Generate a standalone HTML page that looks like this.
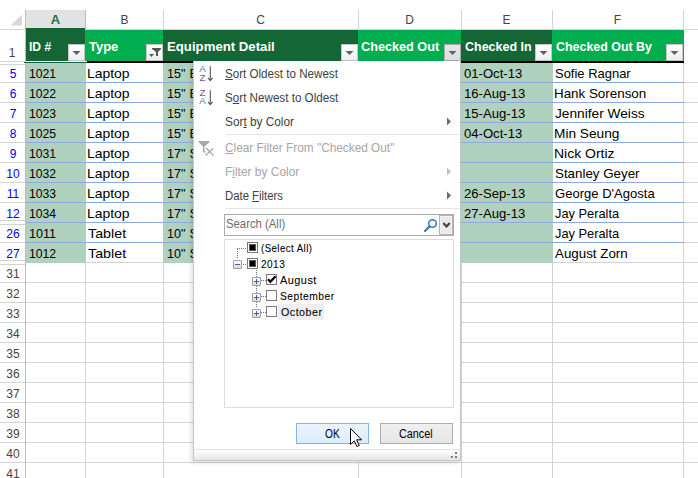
<!DOCTYPE html><html><head><meta charset="utf-8"><style>
html,body{margin:0;padding:0;background:#fff;width:698px;height:478px;overflow:hidden;position:relative;font-family:"Liberation Sans",sans-serif}
.a{position:absolute}
.t{position:absolute;white-space:nowrap;transform-origin:0 0}
u{text-decoration:underline;text-decoration-thickness:1px;text-underline-offset:1px}
</style></head><body>
<div class="a" style="left:85px;top:10px;width:1px;height:468px;background:#D4D4D4;"></div>
<div class="a" style="left:163px;top:10px;width:1px;height:468px;background:#D4D4D4;"></div>
<div class="a" style="left:358px;top:10px;width:1px;height:468px;background:#D4D4D4;"></div>
<div class="a" style="left:461px;top:10px;width:1px;height:468px;background:#D4D4D4;"></div>
<div class="a" style="left:552px;top:10px;width:1px;height:468px;background:#D4D4D4;"></div>
<div class="a" style="left:683px;top:10px;width:1px;height:468px;background:#D4D4D4;"></div>
<div class="a" style="left:0px;top:29px;width:698px;height:1px;background:#D4D4D4;"></div>
<div class="a" style="left:0px;top:82px;width:698px;height:1px;background:#D4D4D4;"></div>
<div class="a" style="left:0px;top:102px;width:698px;height:1px;background:#D4D4D4;"></div>
<div class="a" style="left:0px;top:122px;width:698px;height:1px;background:#D4D4D4;"></div>
<div class="a" style="left:0px;top:142px;width:698px;height:1px;background:#D4D4D4;"></div>
<div class="a" style="left:0px;top:162px;width:698px;height:1px;background:#D4D4D4;"></div>
<div class="a" style="left:0px;top:182px;width:698px;height:1px;background:#D4D4D4;"></div>
<div class="a" style="left:0px;top:202px;width:698px;height:1px;background:#D4D4D4;"></div>
<div class="a" style="left:0px;top:222px;width:698px;height:1px;background:#D4D4D4;"></div>
<div class="a" style="left:0px;top:242px;width:698px;height:1px;background:#D4D4D4;"></div>
<div class="a" style="left:0px;top:262px;width:698px;height:1px;background:#D4D4D4;"></div>
<div class="a" style="left:0px;top:282px;width:698px;height:1px;background:#D4D4D4;"></div>
<div class="a" style="left:0px;top:302px;width:698px;height:1px;background:#D4D4D4;"></div>
<div class="a" style="left:0px;top:322px;width:698px;height:1px;background:#D4D4D4;"></div>
<div class="a" style="left:0px;top:342px;width:698px;height:1px;background:#D4D4D4;"></div>
<div class="a" style="left:0px;top:362px;width:698px;height:1px;background:#D4D4D4;"></div>
<div class="a" style="left:0px;top:382px;width:698px;height:1px;background:#D4D4D4;"></div>
<div class="a" style="left:0px;top:402px;width:698px;height:1px;background:#D4D4D4;"></div>
<div class="a" style="left:0px;top:422px;width:698px;height:1px;background:#D4D4D4;"></div>
<div class="a" style="left:0px;top:442px;width:698px;height:1px;background:#D4D4D4;"></div>
<div class="a" style="left:0px;top:462px;width:698px;height:1px;background:#D4D4D4;"></div>
<div class="a" style="left:25px;top:10px;width:1px;height:468px;background:#BDBDBD;"></div>
<div class="a" style="left:0px;top:222px;width:25px;height:1px;background:#fff;"></div>
<div class="a" style="left:0px;top:262px;width:25px;height:1px;background:#fff;"></div>
<div class="a" style="left:0px;top:61px;width:25px;height:1px;background:#D4D4D4;"></div>
<div class="a" style="left:0px;top:64px;width:25px;height:1px;background:#D4D4D4;"></div>
<div class="a" style="left:0px;top:220px;width:25px;height:1px;background:#D4D4D4;"></div>
<div class="a" style="left:0px;top:224px;width:25px;height:1px;background:#D4D4D4;"></div>
<div class="a" style="left:0px;top:260px;width:25px;height:1px;background:#D4D4D4;"></div>
<div class="a" style="left:0px;top:264px;width:25px;height:1px;background:#D4D4D4;"></div>
<svg class="a" style="left:14px;top:14px;overflow:visible" width="9" height="12"><polygon points="8,0.4 8,11.4 -3.5,11.4" fill="#D8D8D8"/></svg>
<div class="a" style="left:26px;top:10px;width:59px;height:18px;background:#E1E3E2;"></div>
<div class="a" style="left:85px;top:10px;width:1px;height:19px;background:#BDBDBD;"></div>
<div class="t" style="left:26px;top:13px;font-size:13px;line-height:13px;color:#217346;font-weight:bold;width:59px;text-align:center;">A</div>
<div class="t" style="left:86px;top:14px;font-size:12px;line-height:12px;color:#444;width:77px;text-align:center;">B</div>
<div class="t" style="left:163px;top:14px;font-size:12px;line-height:12px;color:#444;width:195px;text-align:center;">C</div>
<div class="t" style="left:358px;top:14px;font-size:12px;line-height:12px;color:#444;width:103px;text-align:center;">D</div>
<div class="t" style="left:461px;top:14px;font-size:12px;line-height:12px;color:#444;width:91px;text-align:center;">E</div>
<div class="t" style="left:552px;top:14px;font-size:12px;line-height:12px;color:#444;width:131px;text-align:center;">F</div>
<div class="a" style="left:26px;top:30px;width:59px;height:31px;background:#146634;"></div>
<div class="a" style="left:85px;top:30px;width:78px;height:31px;background:#00AE4F;"></div>
<div class="a" style="left:163px;top:30px;width:195px;height:31px;background:#146634;"></div>
<div class="a" style="left:358px;top:30px;width:103px;height:31px;background:#00AE4F;"></div>
<div class="a" style="left:461px;top:30px;width:91px;height:31px;background:#146634;"></div>
<div class="a" style="left:552px;top:30px;width:132px;height:31px;background:#00AE4F;"></div>
<div class="a" style="left:26px;top:28px;width:59px;height:33px;background:#146634;"></div>
<div class="a" style="left:26px;top:61px;width:61px;height:1px;background:#fff;"></div>
<div class="a" style="left:24px;top:62px;width:64px;height:1px;background:#146634;"></div>
<div class="a" style="left:87px;top:61px;width:597px;height:2px;background:#000;"></div>
<div class="t" style="left:28.60px;top:40px;font-size:13px;line-height:13px;color:#fff;font-weight:bold;transform:scaleX(0.930);">ID #</div>
<div class="t" style="left:88.90px;top:40px;font-size:13px;line-height:13px;color:#fff;font-weight:bold;transform:scaleX(0.995);">Type</div>
<div class="t" style="left:166.50px;top:40px;font-size:13px;line-height:13px;color:#fff;font-weight:bold;transform:scaleX(1.015);">Equipment Detail</div>
<div class="t" style="left:361.30px;top:40px;font-size:13px;line-height:13px;color:#fff;font-weight:bold;transform:scaleX(0.975);">Checked Out</div>
<div class="t" style="left:464.50px;top:40px;font-size:13px;line-height:13px;color:#fff;font-weight:bold;transform:scaleX(0.961);">Checked In</div>
<div class="t" style="left:555.50px;top:40px;font-size:13px;line-height:13px;color:#fff;font-weight:bold;transform:scaleX(0.956);">Checked Out By</div>
<div class="t" style="left:0.5px;top:68px;font-size:12px;line-height:12px;color:#0000F5;width:25px;text-align:center;">5</div>
<div class="t" style="left:0.5px;top:88px;font-size:12px;line-height:12px;color:#0000F5;width:25px;text-align:center;">6</div>
<div class="t" style="left:0.5px;top:108px;font-size:12px;line-height:12px;color:#0000F5;width:25px;text-align:center;">7</div>
<div class="t" style="left:0.5px;top:128px;font-size:12px;line-height:12px;color:#0000F5;width:25px;text-align:center;">8</div>
<div class="t" style="left:0.5px;top:148px;font-size:12px;line-height:12px;color:#0000F5;width:25px;text-align:center;">9</div>
<div class="t" style="left:0.5px;top:168px;font-size:12px;line-height:12px;color:#0000F5;width:25px;text-align:center;">10</div>
<div class="t" style="left:0.5px;top:188px;font-size:12px;line-height:12px;color:#0000F5;width:25px;text-align:center;">11</div>
<div class="t" style="left:0.5px;top:208px;font-size:12px;line-height:12px;color:#0000F5;width:25px;text-align:center;">12</div>
<div class="t" style="left:0.5px;top:228px;font-size:12px;line-height:12px;color:#0000F5;width:25px;text-align:center;">26</div>
<div class="t" style="left:0.5px;top:248px;font-size:12px;line-height:12px;color:#0000F5;width:25px;text-align:center;">27</div>
<div class="t" style="left:0.5px;top:268px;font-size:12px;line-height:12px;color:#444;width:25px;text-align:center;">31</div>
<div class="t" style="left:0.5px;top:288px;font-size:12px;line-height:12px;color:#444;width:25px;text-align:center;">32</div>
<div class="t" style="left:0.5px;top:308px;font-size:12px;line-height:12px;color:#444;width:25px;text-align:center;">33</div>
<div class="t" style="left:0.5px;top:328px;font-size:12px;line-height:12px;color:#444;width:25px;text-align:center;">34</div>
<div class="t" style="left:0.5px;top:348px;font-size:12px;line-height:12px;color:#444;width:25px;text-align:center;">35</div>
<div class="t" style="left:0.5px;top:368px;font-size:12px;line-height:12px;color:#444;width:25px;text-align:center;">36</div>
<div class="t" style="left:0.5px;top:388px;font-size:12px;line-height:12px;color:#444;width:25px;text-align:center;">37</div>
<div class="t" style="left:0.5px;top:408px;font-size:12px;line-height:12px;color:#444;width:25px;text-align:center;">38</div>
<div class="t" style="left:0.5px;top:428px;font-size:12px;line-height:12px;color:#444;width:25px;text-align:center;">39</div>
<div class="t" style="left:0.5px;top:448px;font-size:12px;line-height:12px;color:#444;width:25px;text-align:center;">40</div>
<div class="t" style="left:0.5px;top:468px;font-size:12px;line-height:12px;color:#444;width:25px;text-align:center;">41</div>
<div class="t" style="left:0px;top:47px;font-size:12px;line-height:12px;color:#444;width:24px;text-align:center;">1</div>
<div class="a" style="left:26px;top:63px;width:60px;height:20px;background:#B0D1BD;"></div>
<div class="a" style="left:163px;top:63px;width:195px;height:20px;background:#B0D1BD;"></div>
<div class="a" style="left:461px;top:63px;width:92px;height:20px;background:#B0D1BD;"></div>
<div class="a" style="left:26px;top:82px;width:658px;height:1px;background:#8EA9DB;"></div>
<div class="a" style="left:26px;top:83px;width:60px;height:20px;background:#B0D1BD;"></div>
<div class="a" style="left:163px;top:83px;width:195px;height:20px;background:#B0D1BD;"></div>
<div class="a" style="left:461px;top:83px;width:92px;height:20px;background:#B0D1BD;"></div>
<div class="a" style="left:26px;top:102px;width:658px;height:1px;background:#8EA9DB;"></div>
<div class="a" style="left:26px;top:103px;width:60px;height:20px;background:#B0D1BD;"></div>
<div class="a" style="left:163px;top:103px;width:195px;height:20px;background:#B0D1BD;"></div>
<div class="a" style="left:461px;top:103px;width:92px;height:20px;background:#B0D1BD;"></div>
<div class="a" style="left:26px;top:122px;width:658px;height:1px;background:#8EA9DB;"></div>
<div class="a" style="left:26px;top:123px;width:60px;height:20px;background:#B0D1BD;"></div>
<div class="a" style="left:163px;top:123px;width:195px;height:20px;background:#B0D1BD;"></div>
<div class="a" style="left:461px;top:123px;width:92px;height:20px;background:#B0D1BD;"></div>
<div class="a" style="left:26px;top:142px;width:658px;height:1px;background:#8EA9DB;"></div>
<div class="a" style="left:26px;top:143px;width:60px;height:20px;background:#B0D1BD;"></div>
<div class="a" style="left:163px;top:143px;width:195px;height:20px;background:#B0D1BD;"></div>
<div class="a" style="left:461px;top:143px;width:92px;height:20px;background:#B0D1BD;"></div>
<div class="a" style="left:26px;top:162px;width:658px;height:1px;background:#8EA9DB;"></div>
<div class="a" style="left:26px;top:163px;width:60px;height:20px;background:#B0D1BD;"></div>
<div class="a" style="left:163px;top:163px;width:195px;height:20px;background:#B0D1BD;"></div>
<div class="a" style="left:461px;top:163px;width:92px;height:20px;background:#B0D1BD;"></div>
<div class="a" style="left:26px;top:182px;width:658px;height:1px;background:#8EA9DB;"></div>
<div class="a" style="left:26px;top:183px;width:60px;height:20px;background:#B0D1BD;"></div>
<div class="a" style="left:163px;top:183px;width:195px;height:20px;background:#B0D1BD;"></div>
<div class="a" style="left:461px;top:183px;width:92px;height:20px;background:#B0D1BD;"></div>
<div class="a" style="left:26px;top:202px;width:658px;height:1px;background:#8EA9DB;"></div>
<div class="a" style="left:26px;top:203px;width:60px;height:20px;background:#B0D1BD;"></div>
<div class="a" style="left:163px;top:203px;width:195px;height:20px;background:#B0D1BD;"></div>
<div class="a" style="left:461px;top:203px;width:92px;height:20px;background:#B0D1BD;"></div>
<div class="a" style="left:26px;top:222px;width:658px;height:1px;background:#8EA9DB;"></div>
<div class="a" style="left:26px;top:223px;width:60px;height:20px;background:#B0D1BD;"></div>
<div class="a" style="left:163px;top:223px;width:195px;height:20px;background:#B0D1BD;"></div>
<div class="a" style="left:461px;top:223px;width:92px;height:20px;background:#B0D1BD;"></div>
<div class="a" style="left:26px;top:242px;width:658px;height:1px;background:#8EA9DB;"></div>
<div class="a" style="left:26px;top:243px;width:60px;height:20px;background:#B0D1BD;"></div>
<div class="a" style="left:163px;top:243px;width:195px;height:20px;background:#B0D1BD;"></div>
<div class="a" style="left:461px;top:243px;width:92px;height:20px;background:#B0D1BD;"></div>
<div class="t" style="left:28.60px;top:67px;font-size:13px;line-height:13px;color:#000;transform:scaleX(0.938);">1021</div>
<div class="t" style="left:87.23px;top:67px;font-size:13px;line-height:13px;color:#000;transform:scaleX(1.072);">Laptop</div>
<div class="t" style="left:166.50px;top:67px;font-size:13px;line-height:13px;color:#000;transform:scaleX(0.966);">15&quot</div>
<div class="t" style="left:189.5px;top:67px;font-size:13px;line-height:13px;color:#000;"> EliteBook</div>
<div class="t" style="left:464.20px;top:67px;font-size:13px;line-height:13px;color:#000;transform:scaleX(1.007);">01-Oct-13</div>
<div class="t" style="left:555.40px;top:67px;font-size:13px;line-height:13px;color:#000;transform:scaleX(0.997);">Sofie Ragnar</div>
<div class="t" style="left:28.60px;top:87px;font-size:13px;line-height:13px;color:#000;transform:scaleX(0.938);">1022</div>
<div class="t" style="left:87.23px;top:87px;font-size:13px;line-height:13px;color:#000;transform:scaleX(1.072);">Laptop</div>
<div class="t" style="left:166.50px;top:87px;font-size:13px;line-height:13px;color:#000;transform:scaleX(0.966);">15&quot</div>
<div class="t" style="left:189.5px;top:87px;font-size:13px;line-height:13px;color:#000;"> EliteBook</div>
<div class="t" style="left:464.20px;top:87px;font-size:13px;line-height:13px;color:#000;transform:scaleX(1.009);">16-Aug-13</div>
<div class="t" style="left:554.37px;top:87px;font-size:13px;line-height:13px;color:#000;transform:scaleX(1.029);">Hank Sorenson</div>
<div class="t" style="left:28.60px;top:107px;font-size:13px;line-height:13px;color:#000;transform:scaleX(0.938);">1023</div>
<div class="t" style="left:87.23px;top:107px;font-size:13px;line-height:13px;color:#000;transform:scaleX(1.072);">Laptop</div>
<div class="t" style="left:166.50px;top:107px;font-size:13px;line-height:13px;color:#000;transform:scaleX(0.966);">15&quot</div>
<div class="t" style="left:189.5px;top:107px;font-size:13px;line-height:13px;color:#000;"> EliteBook</div>
<div class="t" style="left:464.20px;top:107px;font-size:13px;line-height:13px;color:#000;transform:scaleX(1.009);">15-Aug-13</div>
<div class="t" style="left:555.40px;top:107px;font-size:13px;line-height:13px;color:#000;transform:scaleX(1.054);">Jennifer Weiss</div>
<div class="t" style="left:28.60px;top:127px;font-size:13px;line-height:13px;color:#000;transform:scaleX(0.938);">1025</div>
<div class="t" style="left:87.23px;top:127px;font-size:13px;line-height:13px;color:#000;transform:scaleX(1.072);">Laptop</div>
<div class="t" style="left:166.50px;top:127px;font-size:13px;line-height:13px;color:#000;transform:scaleX(0.966);">15&quot</div>
<div class="t" style="left:189.5px;top:127px;font-size:13px;line-height:13px;color:#000;"> EliteBook</div>
<div class="t" style="left:464.20px;top:127px;font-size:13px;line-height:13px;color:#000;transform:scaleX(1.007);">04-Oct-13</div>
<div class="t" style="left:554.35px;top:127px;font-size:13px;line-height:13px;color:#000;transform:scaleX(1.052);">Min Seung</div>
<div class="t" style="left:28.60px;top:147px;font-size:13px;line-height:13px;color:#000;transform:scaleX(0.938);">1031</div>
<div class="t" style="left:87.23px;top:147px;font-size:13px;line-height:13px;color:#000;transform:scaleX(1.072);">Laptop</div>
<div class="t" style="left:166.50px;top:147px;font-size:13px;line-height:13px;color:#000;transform:scaleX(0.966);">17&quot</div>
<div class="t" style="left:189.5px;top:147px;font-size:13px;line-height:13px;color:#000;"> Satellite</div>
<div class="t" style="left:554.33px;top:147px;font-size:13px;line-height:13px;color:#000;transform:scaleX(1.074);">Nick Ortiz</div>
<div class="t" style="left:28.60px;top:167px;font-size:13px;line-height:13px;color:#000;transform:scaleX(0.938);">1032</div>
<div class="t" style="left:87.23px;top:167px;font-size:13px;line-height:13px;color:#000;transform:scaleX(1.072);">Laptop</div>
<div class="t" style="left:166.50px;top:167px;font-size:13px;line-height:13px;color:#000;transform:scaleX(0.966);">17&quot</div>
<div class="t" style="left:189.5px;top:167px;font-size:13px;line-height:13px;color:#000;"> Satellite</div>
<div class="t" style="left:555.40px;top:167px;font-size:13px;line-height:13px;color:#000;transform:scaleX(1.026);">Stanley Geyer</div>
<div class="t" style="left:28.60px;top:187px;font-size:13px;line-height:13px;color:#000;transform:scaleX(0.938);">1033</div>
<div class="t" style="left:87.23px;top:187px;font-size:13px;line-height:13px;color:#000;transform:scaleX(1.072);">Laptop</div>
<div class="t" style="left:166.50px;top:187px;font-size:13px;line-height:13px;color:#000;transform:scaleX(0.966);">17&quot</div>
<div class="t" style="left:189.5px;top:187px;font-size:13px;line-height:13px;color:#000;"> Satellite</div>
<div class="t" style="left:464.20px;top:187px;font-size:13px;line-height:13px;color:#000;transform:scaleX(1.009);">26-Sep-13</div>
<div class="t" style="left:555.40px;top:187px;font-size:13px;line-height:13px;color:#000;transform:scaleX(1.004);">George D&#39;Agosta</div>
<div class="t" style="left:28.60px;top:207px;font-size:13px;line-height:13px;color:#000;transform:scaleX(0.938);">1034</div>
<div class="t" style="left:87.23px;top:207px;font-size:13px;line-height:13px;color:#000;transform:scaleX(1.072);">Laptop</div>
<div class="t" style="left:166.50px;top:207px;font-size:13px;line-height:13px;color:#000;transform:scaleX(0.966);">17&quot</div>
<div class="t" style="left:189.5px;top:207px;font-size:13px;line-height:13px;color:#000;"> Satellite</div>
<div class="t" style="left:464.20px;top:207px;font-size:13px;line-height:13px;color:#000;transform:scaleX(1.009);">27-Aug-13</div>
<div class="t" style="left:555.40px;top:207px;font-size:13px;line-height:13px;color:#000;transform:scaleX(0.985);">Jay Peralta</div>
<div class="t" style="left:28.60px;top:227px;font-size:13px;line-height:13px;color:#000;transform:scaleX(0.970);">1011</div>
<div class="t" style="left:88.20px;top:227px;font-size:13px;line-height:13px;color:#000;transform:scaleX(1.100);">Tablet</div>
<div class="t" style="left:166.50px;top:227px;font-size:13px;line-height:13px;color:#000;transform:scaleX(0.966);">10&quot</div>
<div class="t" style="left:189.5px;top:227px;font-size:13px;line-height:13px;color:#000;"> Surface</div>
<div class="t" style="left:555.40px;top:227px;font-size:13px;line-height:13px;color:#000;transform:scaleX(0.985);">Jay Peralta</div>
<div class="t" style="left:28.60px;top:247px;font-size:13px;line-height:13px;color:#000;transform:scaleX(0.938);">1012</div>
<div class="t" style="left:88.20px;top:247px;font-size:13px;line-height:13px;color:#000;transform:scaleX(1.100);">Tablet</div>
<div class="t" style="left:166.50px;top:247px;font-size:13px;line-height:13px;color:#000;transform:scaleX(0.966);">10&quot</div>
<div class="t" style="left:189.5px;top:247px;font-size:13px;line-height:13px;color:#000;"> Surface</div>
<div class="t" style="left:555.40px;top:247px;font-size:13px;line-height:13px;color:#000;transform:scaleX(1.026);">August Zorn</div>
<div class="a" style="left:68px;top:44px;width:15px;height:15px;border:1px solid #C5C5CC;background:linear-gradient(#FFFFFF,#EEEEF2)"></div>
<svg class="a" style="left:68px;top:44px" width="17" height="17"><polygon points="4.5,7 12.5,7 8.5,11" fill="#606060"/></svg>
<div class="a" style="left:146px;top:44px;width:15px;height:15px;border:1px solid #C5C5CC;background:linear-gradient(#FFFFFF,#EEEEF2)"></div>
<svg class="a" style="left:146px;top:44px" width="17" height="17"><polygon points="6,4 15,4 15,5 12,8 12,12 10,12 10,8 6,5" fill="#555"/><polygon points="3,10 8,10 5.5,13" fill="#555"/></svg>
<div class="a" style="left:341px;top:44px;width:15px;height:15px;border:1px solid #C5C5CC;background:linear-gradient(#FFFFFF,#EEEEF2)"></div>
<svg class="a" style="left:341px;top:44px" width="17" height="17"><polygon points="4.5,7 12.5,7 8.5,11" fill="#606060"/></svg>
<div class="a" style="left:444px;top:44px;width:15px;height:15px;border:1px solid #A9A9B1;background:linear-gradient(#E6E7EC,#DCDEE4)"></div>
<svg class="a" style="left:444px;top:44px" width="17" height="17"><polygon points="4.5,7 12.5,7 8.5,11" fill="#606060"/></svg>
<div class="a" style="left:535px;top:44px;width:15px;height:15px;border:1px solid #C5C5CC;background:linear-gradient(#FFFFFF,#EEEEF2)"></div>
<svg class="a" style="left:535px;top:44px" width="17" height="17"><polygon points="4.5,7 12.5,7 8.5,11" fill="#606060"/></svg>
<div class="a" style="left:666px;top:44px;width:15px;height:15px;border:1px solid #C5C5CC;background:linear-gradient(#FFFFFF,#EEEEF2)"></div>
<svg class="a" style="left:666px;top:44px" width="17" height="17"><polygon points="4.5,7 12.5,7 8.5,11" fill="#606060"/></svg>
<div class="a" style="left:193px;top:61px;width:266px;height:399px;background:#fff;border:1px solid #C6C6C6;border-top:none;box-shadow:-2px 2px 4px rgba(0,0,0,0.12)"></div>
<div class="t" style="left:225.10px;top:68px;font-size:12px;line-height:12px;color:#404040;transform:scaleX(0.967);"><u>S</u>ort Oldest to Newest</div>
<div class="t" style="left:225.10px;top:92px;font-size:12px;line-height:12px;color:#404040;transform:scaleX(0.970);">S<u>o</u>rt Newest to Oldest</div>
<div class="t" style="left:225.10px;top:116px;font-size:12px;line-height:12px;color:#404040;transform:scaleX(0.984);">Sor<u>t</u> by Color</div>
<div class="t" style="left:225.10px;top:142px;font-size:12px;line-height:12px;color:#A6A6A6;transform:scaleX(0.985);"><u>C</u>lear Filter From &quot;Checked Out&quot;</div>
<div class="t" style="left:225.10px;top:166px;font-size:12px;line-height:12px;color:#A6A6A6;transform:scaleX(0.995);">F<u>i</u>lter by Color</div>
<div class="t" style="left:225.10px;top:190px;font-size:12px;line-height:12px;color:#404040;transform:scaleX(0.945);">Date <u>F</u>ilters</div>
<div class="a" style="left:226px;top:134px;width:234px;height:1px;background:#E3E3E3;"></div>
<div class="a" style="left:226px;top:208px;width:234px;height:1px;background:#E3E3E3;"></div>
<svg class="a" style="left:446px;top:117.0px" width="6" height="9"><polygon points="1,0.5 5,4.5 1,8.5" fill="#6A6A6A"/></svg>
<svg class="a" style="left:446px;top:167.0px" width="6" height="9"><polygon points="1,0.5 5,4.5 1,8.5" fill="#C0C0C0"/></svg>
<svg class="a" style="left:446px;top:191.0px" width="6" height="9"><polygon points="1,0.5 5,4.5 1,8.5" fill="#6A6A6A"/></svg>
<svg class="a" style="left:198px;top:64px" width="17" height="42" font-family="Liberation Sans">
<text x="1.3" y="8.3" font-size="9.8" fill="#3E7CC4">A</text><text x="1.6" y="16.8" font-size="9.8" fill="#7B4FA6">Z</text>
<path d="M12.3 2.2 V16.6 M10 13.8 L12.3 16.6 L14.6 13.8" stroke="#555" stroke-width="1.1" fill="none"/>
<text x="1.6" y="32.4" font-size="9.8" fill="#7B4FA6">Z</text><text x="1.3" y="40.4" font-size="9.8" fill="#3E7CC4">A</text>
<path d="M12.3 26.2 V40.6 M10 37.8 L12.3 40.6 L14.6 37.8" stroke="#555" stroke-width="1.1" fill="none"/>
</svg>
<svg class="a" style="left:198px;top:140px" width="17" height="17">
<polygon points="0.5,1 11.5,1 11.5,2 6.5,6.5 6.5,11.5 8,11.5 8,12.5 5,12.5 5,6.5 0.5,2" fill="#A8A8A8"/>
<path d="M8 8 L15.5 15.5 M7.5 15.5 L15 8.5" stroke="#A8A8A8" stroke-width="1.2"/>
</svg>
<div class="a" style="left:224px;top:214px;width:228px;height:20px;border:1px solid #ABABAB;background:#fff"></div>
<div class="t" style="left:226.20px;top:218px;font-size:12px;line-height:12px;color:#6D6D6D;transform:scaleX(0.944);">Search (All)</div>
<div class="a" style="left:439px;top:215px;width:12px;height:18px;background:#E9E9E9;border:1px solid #B4B4B4;box-shadow:inset 0 0 0 1px #F2F2F2"></div>
<svg class="a" style="left:421px;top:216px" width="32" height="18">
<circle cx="11.5" cy="7.5" r="3.8" stroke="#3B78C0" stroke-width="1.6" fill="none"/>
<path d="M8.6 10.4 L4 15" stroke="#3B78C0" stroke-width="2.2" stroke-linecap="round"/>
<path d="M22.3 7 L25.5 10.5 L28.7 7" stroke="#404040" stroke-width="2.1" fill="none"/>
</svg>
<div class="a" style="left:224px;top:239px;width:228px;height:167px;border:1px solid #DCDCDC;background:#fff"></div>
<div class="a" style="left:237px;top:248px;width:9px;height:1px;background:repeating-linear-gradient(90deg,#777 0 1px,transparent 1px 2px)"></div>
<div class="a" style="left:237px;top:249px;width:1px;height:10px;background:repeating-linear-gradient(180deg,#777 0 1px,transparent 1px 2px)"></div>
<div class="a" style="left:243px;top:264px;width:4px;height:1px;background:repeating-linear-gradient(90deg,#777 0 1px,transparent 1px 2px)"></div>
<div class="a" style="left:256px;top:270px;width:1px;height:37px;background:repeating-linear-gradient(180deg,#777 0 1px,transparent 1px 2px)"></div>
<div class="a" style="left:261px;top:280px;width:5px;height:1px;background:repeating-linear-gradient(90deg,#777 0 1px,transparent 1px 2px)"></div>
<div class="a" style="left:261px;top:296px;width:5px;height:1px;background:repeating-linear-gradient(90deg,#777 0 1px,transparent 1px 2px)"></div>
<div class="a" style="left:261px;top:312px;width:5px;height:1px;background:repeating-linear-gradient(90deg,#777 0 1px,transparent 1px 2px)"></div>
<div class="a" style="left:247px;top:242px;width:9px;height:9px;border:1px solid #7A7A7A;background:#fff"></div>
<div class="a" style="left:249px;top:244px;width:7px;height:7px;background:#5A5A5A;"></div>
<div class="a" style="left:250px;top:245px;width:5px;height:5px;background:#000;"></div>
<div class="a" style="left:247px;top:258px;width:9px;height:9px;border:1px solid #7A7A7A;background:#fff"></div>
<div class="a" style="left:249px;top:260px;width:7px;height:7px;background:#5A5A5A;"></div>
<div class="a" style="left:250px;top:261px;width:5px;height:5px;background:#000;"></div>
<div class="a" style="left:233px;top:260px;width:7px;height:7px;border:1px solid #A0A0A0;background:linear-gradient(#FFFFFF,#DADADA);border-radius:1px"></div>
<div class="a" style="left:235px;top:264px;width:5px;height:1px;background:#3D5FA8;"></div>
<div class="a" style="left:266px;top:274px;width:9px;height:9px;border:1px solid #7A7A7A;background:#fff"></div>
<svg class="a" style="left:266px;top:274px" width="11" height="11"><path d="M2 5.2 L4.3 7.8 L9.6 2.2" stroke="#000" stroke-width="2.2" fill="none"/></svg>
<div class="a" style="left:252px;top:277px;width:7px;height:7px;border:1px solid #A0A0A0;background:linear-gradient(#FFFFFF,#DADADA);border-radius:1px"></div>
<div class="a" style="left:254px;top:281px;width:5px;height:1px;background:#3D5FA8;"></div>
<div class="a" style="left:256px;top:279px;width:1px;height:5px;background:#3D5FA8;"></div>
<div class="a" style="left:266px;top:290px;width:9px;height:9px;border:1px solid #7A7A7A;background:#fff"></div>
<div class="a" style="left:252px;top:293px;width:7px;height:7px;border:1px solid #A0A0A0;background:linear-gradient(#FFFFFF,#DADADA);border-radius:1px"></div>
<div class="a" style="left:254px;top:297px;width:5px;height:1px;background:#3D5FA8;"></div>
<div class="a" style="left:256px;top:295px;width:1px;height:5px;background:#3D5FA8;"></div>
<div class="a" style="left:266px;top:306px;width:9px;height:9px;border:1px solid #7A7A7A;background:#fff"></div>
<div class="a" style="left:252px;top:309px;width:7px;height:7px;border:1px solid #A0A0A0;background:linear-gradient(#FFFFFF,#DADADA);border-radius:1px"></div>
<div class="a" style="left:254px;top:313px;width:5px;height:1px;background:#3D5FA8;"></div>
<div class="a" style="left:256px;top:311px;width:1px;height:5px;background:#3D5FA8;"></div>
<div class="a" style="left:278px;top:304px;width:46px;height:16px;background:#EEEEEE;"></div>
<div class="t" style="left:261.40px;top:243px;font-size:11px;line-height:11px;color:#000;transform:scaleX(0.877);-webkit-text-stroke:0.08px #000;letter-spacing:0.5px;">(Select All)</div>
<div class="t" style="left:261.40px;top:259px;font-size:11px;line-height:11px;color:#000;transform:scaleX(0.913);-webkit-text-stroke:0.08px #000;letter-spacing:0.5px;">2013</div>
<div class="t" style="left:280.40px;top:275px;font-size:11px;line-height:11px;color:#000;transform:scaleX(0.989);-webkit-text-stroke:0.08px #000;letter-spacing:0.5px;">August</div>
<div class="t" style="left:280.40px;top:291px;font-size:11px;line-height:11px;color:#000;transform:scaleX(0.936);-webkit-text-stroke:0.08px #000;letter-spacing:0.5px;">September</div>
<div class="t" style="left:280.60px;top:307px;font-size:11px;line-height:11px;color:#000;transform:scaleX(0.973);-webkit-text-stroke:0.08px #000;letter-spacing:0.5px;">October</div>
<div class="a" style="left:296px;top:423px;width:71px;height:19px;border:1px solid #7EB4EA;background:linear-gradient(#ECF4FC,#DCECFC)"></div>
<div class="t" style="left:325.30px;top:428px;font-size:12px;line-height:12px;color:#000;transform:scaleX(0.848);">OK</div>
<div class="a" style="left:380px;top:423px;width:71px;height:19px;border:1px solid #ADADAD;background:linear-gradient(#F0F0F0,#E5E5E5)"></div>
<div class="t" style="left:399.40px;top:428px;font-size:12px;line-height:12px;color:#000;transform:scaleX(0.902);">Cancel</div>
<div class="a" style="left:194px;top:449px;width:266px;height:1px;background:#DCE6F0;"></div>
<div class="a" style="left:194px;top:450px;width:266px;height:10px;background:linear-gradient(#FFFFFF,#E6E6E6)"></div>
<div class="a" style="left:455px;top:452px;width:2px;height:2px;background:#7A7A7A;"></div>
<div class="a" style="left:451px;top:456px;width:2px;height:2px;background:#7A7A7A;"></div>
<div class="a" style="left:455px;top:456px;width:2px;height:2px;background:#7A7A7A;"></div>
<svg class="a" style="left:349px;top:427px" width="14" height="21">
<path d="M1.5 1.5 V17.5 L5.2 13.8 L8 19.5 L10.3 18.5 L7.6 12.8 L12.6 12.8 Z" fill="#fff" stroke="#000" stroke-width="1"/>
</svg>
</body></html>
